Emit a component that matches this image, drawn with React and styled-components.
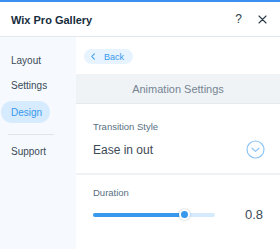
import React from "react";
import styled, { createGlobalStyle } from "styled-components";

const GlobalStyle = createGlobalStyle`
  html, body {
    margin: 0;
    padding: 0;
    background: #ffffff;
  }
  body {
    font-family: "Liberation Sans", Arial, sans-serif;
  }
`;

const Panel = styled.div`
  width: 280px;
  height: 249px;
  display: flex;
  flex-direction: column;
  background: #ffffff;
  border-top: 2px solid #3a8ff0;
  box-sizing: border-box;
  overflow: hidden;
`;

const Header = styled.div`
  height: 34px;
  display: flex;
  align-items: center;
  padding: 0 11px;
  border-bottom: 1px solid #e3e8ed;
  flex-shrink: 0;
`;

const Title = styled.div`
  flex: 1;
  font-size: 11px;
  font-weight: bold;
  color: #162d3d;
  margin-top: 2px;
`;

const HeaderActions = styled.div`
  display: flex;
  align-items: center;
  gap: 16px;
  margin-right: 2px;
  color: #2b3a47;
`;

const HelpMark = styled.span`
  font-size: 12px;
  line-height: 1;
`;

const Body = styled.div`
  flex: 1;
  display: flex;
`;

const Sidebar = styled.nav`
  width: 76px;
  flex-shrink: 0;
  background: #f6faff;
  padding: 12px 0 0 1px;
  box-sizing: border-box;
  display: flex;
  flex-direction: column;
`;

const NavItem = styled.div`
  height: 22px;
  width: 49px;
  display: flex;
  align-items: center;
  padding-left: 10px;
  box-sizing: border-box;
  border-radius: 11px;
  font-size: 10px;
  margin-bottom: ${(p) => p.$after || "3px"};
  color: ${(p) => (p.$active ? "#3899ec" : "#3b4a57")};
  background: ${(p) => (p.$active ? "#d6ebfd" : "transparent")};
`;

const NavDivider = styled.div`
  width: 46px;
  height: 1px;
  background: #dfe5ea;
  margin: 0 0 5px 7px;
`;

const Main = styled.main`
  flex: 1;
  display: flex;
  flex-direction: column;
`;

const BackRow = styled.div`
  height: 37px;
  display: flex;
  align-items: flex-start;
  padding: 12px 0 0 8px;
  box-sizing: border-box;
`;

const BackButton = styled.div`
  width: 49px;
  height: 15px;
  border-radius: 8px;
  background: #e7f3ff;
  color: #3899ec;
  font-size: 9px;
  display: flex;
  align-items: center;
  gap: 7px;
  padding-left: 6px;
  box-sizing: border-box;
`;

const SectionBar = styled.div`
  height: 29px;
  background: #eff3f6;
  border-bottom: 1px solid #e4e9ee;
  display: flex;
  align-items: center;
  justify-content: center;
  font-size: 11px;
  color: #768493;
`;

const Field = styled.div`
  padding: ${(p) => p.$pad || "12px 13px 0 17px"};
  height: ${(p) => p.$height || "auto"};
  box-sizing: border-box;
`;

const Label = styled.div`
  font-size: 9.5px;
  color: #587083;
`;

const ValueRow = styled.div`
  display: flex;
  align-items: center;
  justify-content: space-between;
  margin-top: ${(p) => p.$gap || "8px"};
`;

const Value = styled.div`
  font-size: ${(p) => p.$size || "12px"};
  color: #3d4a55;
`;

const Separator = styled.div`
  height: 2px;
  background: #eef1f6;
`;

const Track = styled.div`
  position: relative;
  width: 122px;
  height: 4px;
  border-radius: 2px;
  background: #d5ebfd;
`;

const Fill = styled.div`
  height: 100%;
  border-radius: 2px;
  background: #3899ec;
`;

const Thumb = styled.div`
  position: absolute;
  top: 50%;
  width: 11px;
  height: 11px;
  margin: -5.5px 0 0 -5.5px;
  border-radius: 50%;
  background: #3899ec;
  border: 2.5px solid #ffffff;
  box-sizing: border-box;
  box-shadow: 0 0 2px rgba(22, 45, 61, 0.35);
`;

function Chevron({ dir = "down", size = 8, color = "#3899ec", width = 1.2 }) {
  const d = dir === "left" ? "M5 1 L2 4 L5 7" : "M1 3 L4 6 L7 3";
  return (
    <svg width={size} height={size} viewBox="0 0 8 8" fill="none">
      <path d={d} stroke={color} strokeWidth={width} strokeLinecap="round" strokeLinejoin="round" />
    </svg>
  );
}

function DropdownIcon() {
  return (
    <svg width="19" height="19" viewBox="0 0 19 19" fill="none">
      <circle cx="9.5" cy="9.5" r="8.5" stroke="#8cc5f6" strokeWidth="1.2" />
      <path d="M6 8.2 L9.5 11.4 L13 8.2" stroke="#8cc5f6" strokeWidth="1.2" strokeLinecap="round" strokeLinejoin="round" />
    </svg>
  );
}

function CloseIcon() {
  return (
    <svg width="9" height="9" viewBox="0 0 9 9" fill="none">
      <path d="M1 1 L8 8 M8 1 L1 8" stroke="#2b3a47" strokeWidth="1.1" strokeLinecap="round" />
    </svg>
  );
}

export default function App() {
  const duration = 0.8;
  const pct = 75;

  return (
    <>
      <GlobalStyle />
      <Panel>
        <Header>
          <Title>Wix Pro Gallery</Title>
          <HeaderActions>
            <HelpMark>?</HelpMark>
            <CloseIcon />
          </HeaderActions>
        </Header>
        <Body>
          <Sidebar>
            <NavItem>Layout</NavItem>
            <NavItem $after="5px">Settings</NavItem>
            <NavItem $active $after="11px">Design</NavItem>
            <NavDivider />
            <NavItem>Support</NavItem>
          </Sidebar>
          <Main>
            <BackRow>
              <BackButton>
                <Chevron dir="left" size={7} />
                Back
              </BackButton>
            </BackRow>
            <SectionBar>Animation Settings</SectionBar>
            <Field $height="69px" $pad="17px 15px 0 17px">
              <Label>Transition Style</Label>
              <ValueRow $gap="8px">
                <Value>Ease in out</Value>
                <DropdownIcon />
              </ValueRow>
            </Field>
            <Separator />
            <Field $pad="12px 17px 0 17px">
              <Label>Duration</Label>
              <ValueRow $gap="9px">
                <Track>
                  <Fill style={{ width: `${pct}%` }} />
                  <Thumb style={{ left: `${pct}%` }} />
                </Track>
                <Value $size="13px">{duration}</Value>
              </ValueRow>
            </Field>
          </Main>
        </Body>
      </Panel>
    </>
  );
}
